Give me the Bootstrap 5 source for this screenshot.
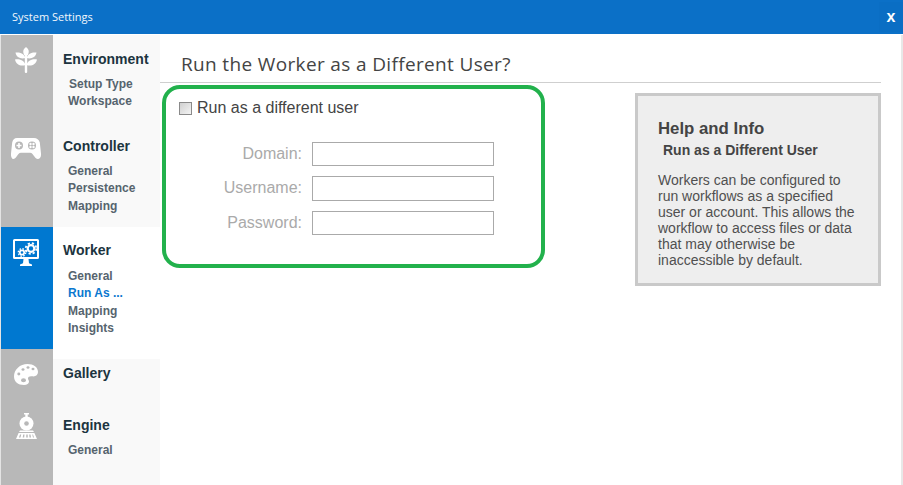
<!DOCTYPE html>
<html lang="en">
<head>
<meta charset="utf-8">
<title>System Settings</title>
<link href="https://cdn.jsdelivr.net/npm/bootstrap@5.3.0/dist/css/bootstrap.min.css" rel="stylesheet">
<style>
html,body{height:100%;}
body{font-family:"Liberation Sans",Arial,sans-serif;background:#fff;overflow:hidden;}
.shell{width:903px;height:485px;}
.titlebar{height:34px;flex:none;background:#0b70c7;color:#f2f7fc;font-family:"Open Sans",sans-serif;font-size:11px;padding-left:12px;}
.closer{width:24px;height:30px;background:#0a6ec4;color:#fff;font-family:"Liberation Sans",sans-serif;font-weight:700;font-size:16px;line-height:1;}
.stage{height:450px;flex:none;margin-top:1px;border-left:1px solid #e4e4e4;border-right:2px solid #e8e8e8;}
.rail{width:52px;background:#b8b8b8;flex:none;}
.railcell{display:flex;justify-content:center;flex:none;color:#fff;padding-right:2px;}
.railcell.active{background:#0078d0;}
.rc-env{height:87px;padding-top:12px;}
.rc-con{height:105px;padding-top:16px;}
.rc-wor{height:122px;padding-top:12px;}
.rc-gal{height:51px;padding-top:15px;}
.rc-eng{height:85px;padding-top:13px;}
.sidenav{width:107px;background:#f9f9f9;flex:none;}
.navsec{flex:none;padding-left:10px;}
.navsec.current{background:#fff;}
.ns-env{height:87px;padding-top:14px;}
.ns-con{height:105px;padding-top:14px;}
.ns-wor{height:132px;padding-top:13px;}
.ns-gal{height:42px;padding-top:4px;}
.ns-eng{height:84px;padding-top:14px;}
.navhead{font-size:14px;font-weight:700;line-height:20px;color:#1c3440;}
.navlist{margin:7px 0 0 5px;padding:0;list-style:none;}
.current .navlist{margin-top:8px;}
.navlist li{font-size:12px;font-weight:700;line-height:17.4px;color:#56646e;}
.navlist li.nudge{padding-left:1px;}
.navlist li.here{color:#0b78cf;}
.pane{flex:1;padding-right:20px;min-width:0;}
.panehead{height:48px;border-bottom:1px solid #cfcfcf;padding:14px 0 0 21px;font-family:"Open Sans",sans-serif;font-size:19px;line-height:30px;color:#444;letter-spacing:.35px;white-space:nowrap;}
.greenbox{width:383px;height:183px;margin:2px 0 0 2px;border:4px solid #22b14c;border-radius:18px;background:#fff;padding:10px 0 0 13px;}
.checkrow{height:18px;font-size:16px;line-height:18px;color:#444;}
.fakecheck.form-check-input{width:13px;height:13px;margin:0 5px 0 0;border:1px solid #8a8a8a;border-radius:0;background:linear-gradient(135deg,#d0d0d0,#f4f4f4);float:none;flex:none;}
.fieldstack{margin:24.75px 0 0 -13px;gap:10px;}
.fieldrow{height:24.5px;}
.fieldlabel{width:136px;margin:0 10px 0 0;padding:0;text-align:right;font-size:16px;line-height:24.5px;color:#aaa;}
.fieldinput.form-control{width:182px;height:24.5px;min-height:0;padding:0 4px;border:1px solid #aaa;border-radius:0;background:#fff;font-size:14px;}
.helpbox{width:246px;height:193px;margin-top:10px;border:3px solid #c9c9c9;background:#eee;padding:23px 8px 0 20px;color:#505050;}
.helptitle{font-size:16.8px;font-weight:700;line-height:20px;color:#444;margin:0;}
.helpsub{font-size:14px;font-weight:700;line-height:18px;color:#444;margin:2px 0 0 5px;}
.helptext{font-size:14px;line-height:16px;margin:13px 0 0;}
</style>
</head>
<body>
<div class="shell d-flex flex-column">
  <div class="titlebar d-flex align-items-center justify-content-between">
    <span>System Settings</span>
    <span class="closer d-flex align-items-center justify-content-center">x</span>
  </div>
  <div class="stage d-flex">
    <div class="rail d-flex flex-column">
      <div class="railcell rc-env">
        <svg width="22" height="26" viewBox="0 0 22 26" fill="#fff"><path d="M11 0c3 2.300 3.600 5.200 1.500 8.300L11 10 9.500 8.300C7.400 5.200 8 2.300 11 0z"/><path d="M.5 5.500c4-.5 8.500.5 10 5.500-4.500 1.300-9-.3-10-5.500zM21.500 5.500c-4-.5-8.500.5-10 5.500 4.500 1.300 9-.3 10-5.500z"/><path d="M0 12.500c4-.7 9 .5 10.500 5.500-4.800 1.500-9.300-.2-10.500-5.500zM22 12.500c-4-.7-9 .5-10.500 5.500 4.800 1.500 9.300-.2 10.500-5.500z"/><rect x="9.800" y="8" width="2.400" height="18" rx="1"/></svg>
      </div>
      <div class="railcell rc-con">
        <svg width="31" height="21" viewBox="1 0 31 21"><path fill="#fff" fill-rule="evenodd" d="M7 0h17c2.800 0 5 1.500 5.800 4.500L31 15.500c.3 3-.8 5.100-2.800 5.400-1.600.2-2.800-.8-3.800-2.300-1.300-2-2.300-3.900-4.400-3.900h-9c-2.100 0-3.100 1.900-4.400 3.900-1 1.500-2.200 2.500-3.800 2.300C1.800 20.600.700 18.500 1 15.500L2.200 4.500C3 1.500 4.200 0 7 0z"/><circle cx="9" cy="7.500" r="4" fill="#b8b8b8"/><path fill="#fff" d="M8.200 5h1.600v1.700h1.700v1.600H9.800V10H8.200V8.300H6.500V6.700h1.700z"/><circle cx="22" cy="7.500" r="4" fill="#b8b8b8"/><circle cx="20.500" cy="6" r="1.200" fill="#fff"/><circle cx="23.500" cy="6" r="1.200" fill="#fff"/><circle cx="20.500" cy="9" r="1.200" fill="#fff"/><circle cx="23.500" cy="9" r="1.200" fill="#fff"/></svg>
      </div>
      <div class="railcell rc-wor active">
        <svg width="26" height="27" viewBox="0 0 26 27"><path fill="#fff" fill-rule="evenodd" d="M1.500 0h23A1.500 1.500 0 0 1 26 1.500v17a1.500 1.500 0 0 1-1.500 1.500h-23A1.500 1.500 0 0 1 0 18.500v-17A1.500 1.500 0 0 1 1.500 0zM2 2v16h22V2z"/><path fill="#fff" d="M10.500 20h5l.5 4.200 3 1.300V27H7v-1.500l3-1.300z"/><circle cx="18" cy="9.500" r="3.300" fill="none" stroke="#fff" stroke-width="2.200"/><circle cx="18" cy="9.500" r="5.300" fill="none" stroke="#fff" stroke-width="1.800" stroke-dasharray="2.200 2"/><circle cx="9" cy="13.500" r="2.200" fill="none" stroke="#fff" stroke-width="1.700"/><circle cx="9" cy="13.500" r="3.700" fill="none" stroke="#fff" stroke-width="1.400" stroke-dasharray="1.500 1.400"/></svg>
      </div>
      <div class="railcell rc-gal">
        <svg width="24" height="21" viewBox="0 0 24 21"><path fill="#fff" d="M13.500 0C19.500 0 24 3.200 24 8c0 3.200-2.600 4.800-5.600 4.300-2.500-.4-4.400.2-4.400 2.200 0 1.200 1 1.700 1 3 0 2.200-2 3.500-5 3.500C4 21 0 17.500 0 12.500 0 5.500 6 0 13.500 0z"/><g fill="#b8b8b8"><ellipse cx="9" cy="5.500" rx="1.500" ry="1.300"/><ellipse cx="14" cy="3.500" rx="1.500" ry="1.200"/><ellipse cx="19" cy="5" rx="1.500" ry="1.300"/><ellipse cx="4.800" cy="10" rx="1.500" ry="1.400"/><ellipse cx="9.500" cy="16.300" rx="2.500" ry="2"/></g></svg>
      </div>
      <div class="railcell rc-eng">
        <svg width="21" height="26" viewBox="0 0 21 26"><path fill="#fff" d="M8 0h5v1.500h-1.300V4H9.300V1.500H8z"/><circle cx="10.500" cy="10.500" r="7" fill="#fff"/><circle cx="10.500" cy="10.500" r="2.300" fill="#b8b8b8"/><path fill="#fff" d="M4 17.500h13l1 1.500H3z"/><path fill="#fff" fill-rule="evenodd" d="M2.600 20h15.800L21 26H0zM4 21.500l-1 3h1.500l.7-3zm3.200 0l-.5 3h1.500l.3-3zm3.100 0l-.1 3h1.600l-.1-3zm2.900 0l.3 3h1.500l-.5-3zm3.100 0l.7 3H18l-1-3z"/></svg>
      </div>
    </div>
    <nav class="sidenav d-flex flex-column">
      <div class="navsec ns-env">
        <div class="navhead">Environment</div>
        <ul class="navlist"><li class="nudge">Setup Type</li><li>Workspace</li></ul>
      </div>
      <div class="navsec ns-con">
        <div class="navhead">Controller</div>
        <ul class="navlist"><li>General</li><li>Persistence</li><li>Mapping</li></ul>
      </div>
      <div class="navsec ns-wor current">
        <div class="navhead">Worker</div>
        <ul class="navlist"><li>General</li><li class="here">Run As ...</li><li>Mapping</li><li>Insights</li></ul>
      </div>
      <div class="navsec ns-gal">
        <div class="navhead">Gallery</div>
      </div>
      <div class="navsec ns-eng">
        <div class="navhead">Engine</div>
        <ul class="navlist"><li>General</li></ul>
      </div>
    </nav>
    <main class="pane">
      <div class="panehead">Run the Worker as a Different User?</div>
      <div class="d-flex justify-content-between align-items-start">
        <div class="greenbox">
          <div class="checkrow d-flex align-items-center">
            <input class="form-check-input fakecheck" type="checkbox" id="diffuser">
            <label for="diffuser">Run as a different user</label>
          </div>
          <div class="fieldstack d-flex flex-column">
            <div class="fieldrow d-flex"><label class="fieldlabel" for="fd">Domain:</label><input class="form-control fieldinput" id="fd" type="text"></div>
            <div class="fieldrow d-flex"><label class="fieldlabel" for="fu">Username:</label><input class="form-control fieldinput" id="fu" type="text"></div>
            <div class="fieldrow d-flex"><label class="fieldlabel" for="fp">Password:</label><input class="form-control fieldinput" id="fp" type="text"></div>
          </div>
        </div>
        <aside class="helpbox">
          <h2 class="helptitle">Help and Info</h2>
          <div class="helpsub">Run as a Different User</div>
          <p class="helptext">Workers can be configured to<br>run workflows as a specified<br>user or account. This allows the<br>workflow to access files or data<br>that may otherwise be<br>inaccessible by default.</p>
        </aside>
      </div>
    </main>
  </div>
</div>
<script src="https://cdn.jsdelivr.net/npm/bootstrap@5.3.0/dist/js/bootstrap.bundle.min.js"></script>
</body>
</html>
